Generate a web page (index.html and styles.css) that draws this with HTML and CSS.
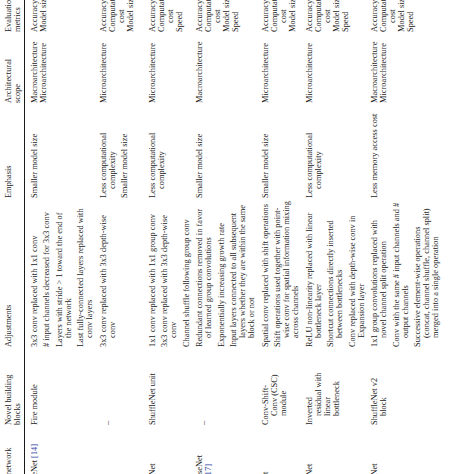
FILE: index.html
```html
<!DOCTYPE html>
<html>
<head>
<meta charset="utf-8">
<link rel="stylesheet" href="styles.css">
</head>
<body>
<div class="page">
  <div class="table">
    <div class="row head">
      <div class="c">Neural network</div>
      <div class="c">Novel building<br><span class="cont">blocks</span></div>
      <div class="c">Adjustments</div>
      <div class="c">Emphasis</div>
      <div class="c">Architectural<br><span class="cont">scope</span></div>
      <div class="c">Evaluation<br><span class="cont">metrics</span></div>
    </div>

    <div class="row first">
      <div class="c">SqueezeNet <span class="ref">[14]</span></div>
      <div class="c gap"><p class="i">Fire module</p></div>
      <div class="c gap">
        <p class="i">3x3 conv replaced with 1x1 conv</p>
        <p class="i"># input channels decreased for 3x3 conv</p>
        <p class="i">Layers with stride &gt; 1 toward the end of<br>the network</p>
        <p class="i">Last fully-connected layers replaced with<br>conv layers</p>
      </div>
      <div class="c gap"><p class="i">Smaller model size</p></div>
      <div class="c"><p class="i">Macroarchitecture</p><p class="i">Microarchitecture</p></div>
      <div class="c"><p class="i">Accuracy</p><p class="i">Model size</p></div>
    </div>

    <div class="row tall">
      <div class="c"></div>
      <div class="c gap"><p class="i dash">–</p></div>
      <div class="c gap">
        <p class="i">3x3 conv replaced with 3x3 depth-wise<br>conv</p>
      </div>
      <div class="c gap">
        <p class="i">Less computational<br>complexity</p>
        <p class="i">Smaller model size</p>
      </div>
      <div class="c"><p class="i">Microarchitecture</p></div>
      <div class="c"><p class="i">Accuracy</p><p class="i">Computational<br>cost</p><p class="i">Model size</p></div>
    </div>

    <div class="row">
      <div class="c">ShuffleNet</div>
      <div class="c gap"><p class="i">ShuffleNet unit</p></div>
      <div class="c gap">
        <p class="i">1x1 conv replaced with 1x1 group conv</p>
        <p class="i">3x3 conv replaced with 3x3 depth-wise<br>conv</p>
        <p class="i">Channel shuffle following group conv</p>
      </div>
      <div class="c gap"><p class="i">Less computational<br>complexity</p></div>
      <div class="c"><p class="i">Microarchitecture</p></div>
      <div class="c"><p class="i">Accuracy</p><p class="i">Computational<br>cost</p><p class="i">Speed</p></div>
    </div>

    <div class="row">
      <div class="c">CondenseNet<br><span class="ref far">[17]</span></div>
      <div class="c gap"><p class="i dash">–</p></div>
      <div class="c gap">
        <p class="i">Redundant connections removed in favor<br>of learned group convolutions</p>
        <p class="i">Exponentially increasing growth rate</p>
        <p class="i">Input layers connected to all subsequent<br>layers whether they are within the same<br>block or not</p>
      </div>
      <div class="c gap"><p class="i">Smaller model size</p></div>
      <div class="c"><p class="i">Macroarchitecture</p></div>
      <div class="c"><p class="i">Accuracy</p><p class="i">Computational<br>cost</p><p class="i">Model size</p><p class="i">Speed</p></div>
    </div>

    <div class="row">
      <div class="c">ShiftNet</div>
      <div class="c gap"><p class="i">Conv-Shift-<br>Conv (CSC)<br>module</p></div>
      <div class="c gap">
        <p class="i">Spatial conv replaced with shift operations</p>
        <p class="i">Shift operations used together with point-<br>wise conv for spatial information mixing<br>across channels</p>
      </div>
      <div class="c gap"><p class="i">Smaller model size</p></div>
      <div class="c"><p class="i">Microarchitecture</p></div>
      <div class="c"><p class="i">Accuracy</p><p class="i">Computational<br>cost</p><p class="i">Model size</p></div>
    </div>

    <div class="row">
      <div class="c">MobileNet</div>
      <div class="c gap"><p class="i">Inverted<br>residual with<br>linear<br>bottleneck</p></div>
      <div class="c gap">
        <p class="i">ReLU non-linearity replaced with linear<br>bottleneck layer</p>
        <p class="i">Shortcut connections directly inserted<br>between bottlenecks</p>
        <p class="i">Conv replaced with depth-wise conv in<br>Expansion layer</p>
      </div>
      <div class="c gap"><p class="i">Less computational<br>complexity</p></div>
      <div class="c"><p class="i">Microarchitecture</p></div>
      <div class="c"><p class="i">Accuracy</p><p class="i">Computational<br>cost</p><p class="i">Model size</p><p class="i">Speed</p></div>
    </div>

    <div class="row">
      <div class="c">ShuffleNet</div>
      <div class="c gap"><p class="i">ShuffleNet v2<br>block</p></div>
      <div class="c gap">
        <p class="i">1x1 group convolutions replaced with<br>novel channel split operation</p>
        <p class="i">Conv with the same # input channels and #<br>output channels</p>
        <p class="i">Successive element-wise operations<br>(concat, channel shuffle, channel split)<br>merged into a single operation</p>
      </div>
      <div class="c gap"><p class="i">Less memory access cost</p></div>
      <div class="c"><p class="i">Macroarchitecture</p><p class="i">Microarchitecture</p></div>
      <div class="c"><p class="i">Accuracy</p><p class="i">Computational<br>cost</p><p class="i">Model size</p><p class="i">Speed</p></div>
    </div>
  </div>
</div>
</body>
</html>
```

FILE: styles.css
```css
html, body {
  margin: 0;
  padding: 0;
  overflow: hidden;
  background: #ffffff;
}

.page {
  width: 474px;
  height: 474px;
  overflow: hidden;
  background: #ffffff;
}

.table {
  width: 560px;
  font-family: "Liberation Serif", "Times New Roman", serif;
  font-size: 8.4px;
  line-height: 9px;
  color: #1c1c1c;
  transform-origin: 0 0;
  transform: translate(0, 500px) rotate(-90deg);
}

.row {
  display: grid;
  grid-template-columns: 75px 78px 149px 95px 71px 92px;
  padding: 0 0 4.5px 0;
}

.row.head {
  padding: 3.5px 0 2px 0;
  border-bottom: 1px solid #1a1a1a;
  margin-bottom: 5px;
}

.row.tall {
  padding-bottom: 13px;
}

.c {
  white-space: nowrap;
}

.i {
  margin: 0;
  padding-left: 9px;
  text-indent: -9px;
}

.gap .i + .i {
  margin-top: 3.5px;
}

.dash {
  padding-top: 4px;
}

.ref {
  color: #3344a6;
}

.ref.far {
  display: inline-block;
  padding-left: 22px;
}
```
